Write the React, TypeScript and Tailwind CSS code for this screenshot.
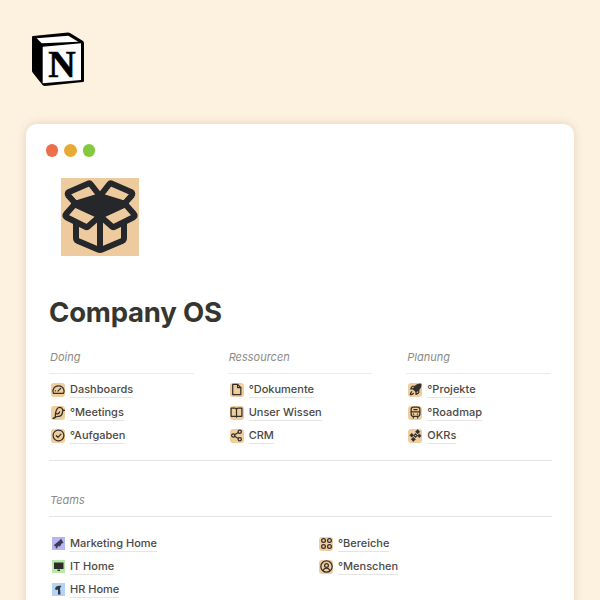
import React from "react";

const chip = "flex h-[14px] w-[14px] shrink-0 items-center justify-center rounded-[3px] bg-[#f0cd9f]";

function Ico({ children }: { children: React.ReactNode }) {
  return (
    <svg viewBox="0 0 24 24" className="h-[13px] w-[13px]" fill="none" stroke="#33302b" strokeWidth="2.300" strokeLinecap="round" strokeLinejoin="round">
      {children}
    </svg>
  );
}

const icons: Record<string, React.ReactNode> = {
  gauge: (
    <Ico>
      <path d="M3 19h18c1.500-2 1.500-5 .5-7.500C20 8 16.500 5.500 12 5.500S4 8 2.500 11.500C1.500 14 1.500 17 3 19z" />
      <path d="M11 15l5-5" />
      <path d="M6 14.500h.5" />
    </Ico>
  ),
  bird: (
    <Ico>
      <path d="M2 23c1-1 2-1.500 4-2.500 0-6 1-12 4-16 2-2.500 6-3 8-.5 1 1 1 2 1.500 3L23 8l-3.500 1c0 6-3 10-8 10-2 0-5 1-6.500 3z" />
      <path d="M8 14c2 1 5 0 6-3" />
    </Ico>
  ),
  check: (
    <Ico>
      <circle cx="12" cy="12" r="10" />
      <path d="M8 12.500l3 3 5.500-6" />
    </Ico>
  ),
  file: (
    <Ico>
      <path d="M5 2.500h9l6 6V21.500H5z" />
      <path d="M14 2.500v6h6" />
    </Ico>
  ),
  book: (
    <Ico>
      <path d="M2 4h7c2 0 3 1 3 2.500C12 5 13 4 15 4h7v15h-8c-1 0-2 .5-2 1.500 0-1-1-1.500-2-1.500H2z" />
      <path d="M12 6.500V20" />
    </Ico>
  ),
  share: (
    <Ico>
      <circle cx="18" cy="5" r="3" />
      <circle cx="6" cy="12" r="3" />
      <circle cx="18" cy="19" r="3" />
      <path d="M8.600 10.500l6.800-4M8.600 13.500l6.800 4" />
    </Ico>
  ),
  rocket: (
    <Ico>
      <path d="M22 2c-7 0-11 3-14 9l5 5c6-3 9-7 9-14z" fill="#33302b" />
      <path d="M8 11H3l3-5h5M13 16v5l5-3v-5" />
      <path d="M5 16c-1.500 1-2.500 3-2.500 5.500C5 21.500 7 20.500 8 19" />
    </Ico>
  ),
  bus: (
    <Ico>
      <rect x="4" y="2" width="16" height="17" rx="4" />
      <path d="M4 11h16M9 6.500h6" />
      <path d="M8 19v3M16 19v3M8 15h.5M15.500 15h.5" />
    </Ico>
  ),
  okr: (
    <svg viewBox="0 0 24 24" className="h-[13px] w-[13px]" fill="#33302b" stroke="#33302b" strokeWidth="1">
      <path d="M12 9l3 3-3 3-3-3z" fill="none" strokeWidth="2" />
      <path d="M16 1l4 4-4 4-4-4zM5 8l3.500 3.500L5 15l-3.500-3.500zM19 9l3.500 3.500L19 16l-3.500-3.500zM8 15l4 4-4 4-4-4z" />
    </svg>
  ),
  grid: (
    <Ico>
      <circle cx="6.500" cy="6.500" r="3.500" />
      <circle cx="17.500" cy="6.500" r="3.500" />
      <circle cx="6.500" cy="17.500" r="3.500" />
      <circle cx="17.500" cy="17.500" r="3.500" />
    </Ico>
  ),
  user: (
    <Ico>
      <circle cx="12" cy="12" r="10.500" />
      <circle cx="12" cy="10" r="3.500" />
      <path d="M6 19c1-3 3.500-4 6-4s5 1 6 4" />
    </Ico>
  ),
};

function Row({ icon, label }: { icon: string; label: string }) {
  return (
    <div className="flex h-[23px] items-center gap-[5px] pl-[2px]">
      <span className={chip}>{icons[icon]}</span>
      <span className="border-b border-[#e6e5e2] text-[11px] leading-[15px] font-medium text-[#4b4945]">{label}</span>
    </div>
  );
}

function Column({ title, items }: { title: string; items: [string, string][] }) {
  return (
    <div className="w-[145px]">
      <div className="border-b border-[#ecebe9] pb-[9px] pl-px text-[11px] leading-[14px] text-[#8b8a86] italic">{title}</div>
      <div className="mt-[4px]">
        {items.map(([icon, label]) => (
          <Row key={label} icon={icon} label={label} />
        ))}
      </div>
    </div>
  );
}

function TeamRow({ bg, label, children }: { bg: string; label: string; children: React.ReactNode }) {
  return (
    <div className="flex h-[23px] items-center gap-[5px] pl-[3px]">
      <span className={`flex h-[13px] w-[13px] shrink-0 items-center justify-center ${bg}`}>{children}</span>
      <span className="border-b border-[#e6e5e2] text-[11px] leading-[15px] font-medium text-[#4b4945]">{label}</span>
    </div>
  );
}

export default function App() {
  return (
    <div className="h-[600px] w-[600px] overflow-hidden bg-[#fdf1e0] font-['Inter',sans-serif]">
      <div className="pt-[32px] pl-[32px]">
        <svg width="52" height="54" viewBox="0 0 52 54" className="block">
          <path d="M1 4L36 .5Q37 .5 38 1L51 9Q52 10 52 11V49Q52 50 51 50L13 54Q11.500 54 10.500 53L1 41Q0 40 0 39V5Q0 4 1 4z" fill="#000" />
          <path d="M4.700 6.300L36.300 3.700 46.300 9.700 9.700 11.300z" fill="#fff" />
          <path d="M10.700 14.700L49 11.300V48L10.700 51.300z" fill="#fff" />
          <text x="30" y="45" textAnchor="middle" fontFamily="'Liberation Serif',serif" fontWeight="700" fontSize="38" fill="#000" stroke="#000" strokeWidth="0.600">N</text>
        </svg>
      </div>
      <div className="mx-[26px] mt-[38px] h-[500px] rounded-t-[11px] bg-white px-[23px] pt-[20px] shadow-[0_0_10px_rgba(120,90,50,0.2)]">
        <div className="-ml-[3.300px] flex gap-[6px]">
          <span className="h-[12.500px] w-[12.500px] rounded-full bg-[#ed6e4c]" />
          <span className="h-[12.500px] w-[12.500px] rounded-full bg-[#e8aa37]" />
          <span className="h-[12.500px] w-[12.500px] rounded-full bg-[#85c93e]" />
        </div>
        <div className="mt-[21.500px] ml-[12px] h-[78px] w-[78px] bg-[#eecb9e]">
          <svg viewBox="0 0 78 78" className="h-[78px] w-[78px]" fill="none" stroke="#26272a" strokeWidth="6" strokeLinejoin="round" strokeLinecap="round">
            <path d="M39 18L30 6.500c-.8-1-2-1.300-3-.8L8 14c-1.500.8-1.700 2.500-.8 3.500L14 25" />
            <path d="M39 18L48 6.500c.8-1 2-1.300 3-.8L70 14c1.500.8 1.700 2.500.8 3.500L64 25" />
            <path d="M13 26L39 18l26 8-26 12z" fill="#26272a" />
            <path d="M13 27L5 36c-1 1-.8 2.500.5 3.300l19 9.500c1 .5 2 .3 2.800-.5L39 38" />
            <path d="M65 27L73 36c1 1 .8 2.500-.5 3.300l-19 9.500c-1 .5-2 .3-2.800-.5L39 38" />
            <path d="M15 45V60c0 1.500.5 2.300 2 3l20 8.500c1.300.6 2.700.6 4 0l20-8.500c1.500-.7 2-1.500 2-3V45" />
            <path d="M39 38V71" />
          </svg>
        </div>
        <h1 className="mt-[38px] text-[27.500px] leading-[36px] font-bold tracking-[-0.2px] text-[#37352f]">Company OS</h1>
        <div className="mt-[20px] flex gap-[34px]">
          <Column title="Doing" items={[["gauge", "Dashboards"], ["bird", "°Meetings"], ["check", "°Aufgaben"]]} />
          <Column title="Ressourcen" items={[["file", "°Dokumente"], ["book", "Unser Wissen"], ["share", "CRM"]]} />
          <Column title="Planung" items={[["rocket", "°Projekte"], ["bus", "°Roadmap"], ["okr", "OKRs"]]} />
        </div>
        <div className="mt-[13px] h-px w-[503px] bg-[#e6e5e3]" />
        <div className="mt-[32px] w-[503px] border-b border-[#e6e5e3] pb-[9px] pl-px text-[11px] leading-[14px] text-[#8b8a86] italic">Teams</div>
        <div className="mt-[15px] flex">
          <div className="w-[268px]">
            <TeamRow bg="bg-[#b9b5ee]" label="Marketing Home">
              <svg viewBox="0 0 13 13" className="h-[13px] w-[13px]"><path d="M2 8l6-5 1-1.500 2.500 4.500-2 .5L8 9.500 6 9l-1 2.500-1.500-.5.5-2-1.500.5z" fill="#3d3a55" /></svg>
            </TeamRow>
            <TeamRow bg="bg-[#b8e8a8]" label="IT Home">
              <svg viewBox="0 0 13 13" className="h-[13px] w-[13px]"><path d="M2 2.500h9.500V9H2zM5.500 9.500h2.500V11H5.500z" fill="#2b2d2a" /></svg>
            </TeamRow>
            <TeamRow bg="bg-[#b5d3f2]" label="HR Home">
              <svg viewBox="0 0 13 13" className="h-[13px] w-[13px]"><path d="M3 6c0-3 4-4 6.500-3L8 5l.5 6.500h-2.500L6 6.500 4 7z" fill="#2e3640" /></svg>
            </TeamRow>
          </div>
          <div>
            <Row icon="grid" label="°Bereiche" />
            <Row icon="user" label="°Menschen" />
          </div>
        </div>
      </div>
    </div>
  );
}
